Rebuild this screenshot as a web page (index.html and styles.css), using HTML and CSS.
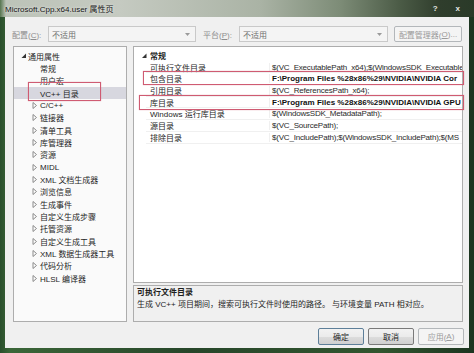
FILE: index.html
```html
<!DOCTYPE html>
<html lang="zh-CN">
<head>
<meta charset="utf-8">
<title>Microsoft.Cpp.x64.user 属性页</title>
<link rel="stylesheet" href="styles.css">
</head>
<body>
<div class="window">
  <div class="titlebar">
    <span class="title">Microsoft.Cpp.x64.user 属性页</span>
    <span class="caps"><span class="cap">?</span><span class="cap">x</span></span>
  </div>
  <div class="client">
    <div class="toolbar">
      <span class="lbl dim">配置(<u>C</u>):</span>
      <div class="combo c1"><span>不适用</span><svg class="arrow" width="5" height="3" viewBox="0 0 5 3"><polygon points="0,0 5,0 2.5,3" fill="#9a9a9a"/></svg></div>
      <span class="lbl dim l2">平台(<u>P</u>):</span>
      <div class="combo c2"><span>不适用</span><svg class="arrow" width="5" height="3" viewBox="0 0 5 3"><polygon points="0,0 5,0 2.5,3" fill="#9a9a9a"/></svg></div>
      <div class="btn disabled mgr">配置管理器(<u>O</u>)...</div>
    </div>
    <div class="main">
      <div class="tree">
        <div class="row root"><svg class="exp" width="7" height="6" viewBox="0 0 7 6"><polygon points="5,0.5 5,5 0.5,5" fill="#333"/></svg><span>通用属性</span></div>
        <div class="row leaf"><span>常规</span></div>
        <div class="row leaf"><span>用户宏</span></div>
        <div class="row leaf sel"><span>VC++ 目录</span></div>
        <div class="row sub"><svg class="exp" width="8" height="7" viewBox="0 0 8 7"><polygon points="1,0.5 4.5,3.5 1,6.5" fill="#fff" stroke="#8a8a8a" stroke-width="1"/></svg><span>C/C++</span></div>
        <div class="row sub"><svg class="exp" width="8" height="7" viewBox="0 0 8 7"><polygon points="1,0.5 4.5,3.5 1,6.5" fill="#fff" stroke="#8a8a8a" stroke-width="1"/></svg><span>链接器</span></div>
        <div class="row sub"><svg class="exp" width="8" height="7" viewBox="0 0 8 7"><polygon points="1,0.5 4.5,3.5 1,6.5" fill="#fff" stroke="#8a8a8a" stroke-width="1"/></svg><span>清单工具</span></div>
        <div class="row sub"><svg class="exp" width="8" height="7" viewBox="0 0 8 7"><polygon points="1,0.5 4.5,3.5 1,6.5" fill="#fff" stroke="#8a8a8a" stroke-width="1"/></svg><span>库管理器</span></div>
        <div class="row sub"><svg class="exp" width="8" height="7" viewBox="0 0 8 7"><polygon points="1,0.5 4.5,3.5 1,6.5" fill="#fff" stroke="#8a8a8a" stroke-width="1"/></svg><span>资源</span></div>
        <div class="row sub"><svg class="exp" width="8" height="7" viewBox="0 0 8 7"><polygon points="1,0.5 4.5,3.5 1,6.5" fill="#fff" stroke="#8a8a8a" stroke-width="1"/></svg><span>MIDL</span></div>
        <div class="row sub"><svg class="exp" width="8" height="7" viewBox="0 0 8 7"><polygon points="1,0.5 4.5,3.5 1,6.5" fill="#fff" stroke="#8a8a8a" stroke-width="1"/></svg><span>XML 文档生成器</span></div>
        <div class="row sub"><svg class="exp" width="8" height="7" viewBox="0 0 8 7"><polygon points="1,0.5 4.5,3.5 1,6.5" fill="#fff" stroke="#8a8a8a" stroke-width="1"/></svg><span>浏览信息</span></div>
        <div class="row sub"><svg class="exp" width="8" height="7" viewBox="0 0 8 7"><polygon points="1,0.5 4.5,3.5 1,6.5" fill="#fff" stroke="#8a8a8a" stroke-width="1"/></svg><span>生成事件</span></div>
        <div class="row sub"><svg class="exp" width="8" height="7" viewBox="0 0 8 7"><polygon points="1,0.5 4.5,3.5 1,6.5" fill="#fff" stroke="#8a8a8a" stroke-width="1"/></svg><span>自定义生成步骤</span></div>
        <div class="row sub"><svg class="exp" width="8" height="7" viewBox="0 0 8 7"><polygon points="1,0.5 4.5,3.5 1,6.5" fill="#fff" stroke="#8a8a8a" stroke-width="1"/></svg><span>托管资源</span></div>
        <div class="row sub"><svg class="exp" width="8" height="7" viewBox="0 0 8 7"><polygon points="1,0.5 4.5,3.5 1,6.5" fill="#fff" stroke="#8a8a8a" stroke-width="1"/></svg><span>自定义生成工具</span></div>
        <div class="row sub"><svg class="exp" width="8" height="7" viewBox="0 0 8 7"><polygon points="1,0.5 4.5,3.5 1,6.5" fill="#fff" stroke="#8a8a8a" stroke-width="1"/></svg><span>XML 数据生成器工具</span></div>
        <div class="row sub"><svg class="exp" width="8" height="7" viewBox="0 0 8 7"><polygon points="1,0.5 4.5,3.5 1,6.5" fill="#fff" stroke="#8a8a8a" stroke-width="1"/></svg><span>代码分析</span></div>
        <div class="row sub"><svg class="exp" width="8" height="7" viewBox="0 0 8 7"><polygon points="1,0.5 4.5,3.5 1,6.5" fill="#fff" stroke="#8a8a8a" stroke-width="1"/></svg><span>HLSL 编译器</span></div>
        <div class="mark tree-mark"></div>
      </div>
      <div class="right">
        <div class="grid">
          <div class="grow cat"><svg class="cexp" width="7" height="6" viewBox="0 0 7 6"><polygon points="5,0.5 5,5 0.5,5" fill="#333"/></svg><span class="name">常规</span></div>
          <div class="grow"><span class="name">可执行文件目录</span><span class="val">$(VC_ExecutablePath_x64);$(WindowsSDK_Executable</span></div>
          <div class="grow"><span class="name">包含目录</span><span class="val b">F:\Program Files %28x86%29\NVIDIA\NVIDIA Cor</span></div>
          <div class="grow"><span class="name">引用目录</span><span class="val">$(VC_ReferencesPath_x64);</span></div>
          <div class="grow"><span class="name">库目录</span><span class="val b">F:\Program Files %28x86%29\NVIDIA\NVIDIA GPU</span></div>
          <div class="grow"><span class="name">Windows 运行库目录</span><span class="val">$(WindowsSDK_MetadataPath);</span></div>
          <div class="grow"><span class="name">源目录</span><span class="val">$(VC_SourcePath);</span></div>
          <div class="grow"><span class="name">排除目录</span><span class="val">$(VC_IncludePath);$(WindowsSDK_IncludePath);$(MS</span></div>
          <div class="mark grid-mark1"></div>
          <div class="mark grid-mark2"></div>
        </div>
        <div class="desc">
          <div class="dtitle">可执行文件目录</div>
          <div class="dtext">生成 VC++ 项目期间，搜索可执行文件时使用的路径。 与环境变量 PATH 相对应。</div>
        </div>
      </div>
    </div>
    <div class="buttons">
      <div class="btn ok">确定</div>
      <div class="btn">取消</div>
      <div class="btn disabled">应用(<u>A</u>)</div>
    </div>
  </div>
</div>
</body>
</html>
```

FILE: styles.css
```css
* { box-sizing: border-box; }
html, body { margin: 0; padding: 0; }
body {
  width: 474px;
  height: 353px;
  overflow: hidden;
  font-family: "Liberation Sans", "Noto Sans CJK SC", sans-serif;
  font-size: 8px;
  color: #1e1e1e;
}
u { text-decoration: underline; }

.window {
  width: 474px;
  height: 353px;
  display: flex;
  flex-direction: column;
  background: linear-gradient(to right, #2a4f2c 0%, #3b6638 2%, #27462a 40%, #32562f 80%, #1c3520 100%);
}

.titlebar {
  height: 17px;
  flex: none;
  display: flex;
  align-items: center;
  background: linear-gradient(to right, #56754f 0px, #bcc3b8 6px, #c5cac1 120px, #aab3a5 260px, #7d8c77 340px, #4b5b46 400px, #2f3d2c 440px, #2a3a28 474px);
}
.title {
  padding-left: 5px;
  font-size: 8px;
  color: #161616;
  text-shadow: 0 0 3px rgba(255,255,255,0.9);
}
.caps {
  margin-left: auto;
  display: flex;
  gap: 18px;
  padding-right: 14px;
}
.cap {
  color: #e4e8e4;
  font-weight: bold;
  font-family: "Liberation Sans", sans-serif;
  font-size: 8px;
}

.client {
  margin: 0 5px;
  height: 331px;
  background: #f0f0f0;
  display: flex;
  flex-direction: column;
}

.toolbar {
  margin-top: 9px;
  height: 16px;
  display: flex;
  align-items: center;
  padding-left: 7px;
}
.lbl { width: 36px; flex: none; }
.l2 { margin-left: 7px; }
.dim { color: #8d8d8d; }
.combo {
  height: 16px;
  flex: none;
  border: 1px solid #c9c9c9;
  background: #f4f4f4;
  display: flex;
  align-items: center;
  padding: 0 5px 0 3px;
  color: #6f6f6f;
}
.combo .arrow { margin-left: auto; }
.c1 { width: 148px; }
.c2 { width: 149px; }

.btn {
  height: 17px;
  width: 46px;
  flex: none;
  display: flex;
  align-items: center;
  justify-content: center;
  border: 1px solid #7a7a7a;
  border-radius: 2px;
  background: linear-gradient(#f2f2f2 0%, #ebebeb 50%, #dddddd 51%, #d0d0d0 100%);
  color: #1e1e1e;
}
.btn.ok { border-color: #5d7f99; }
.btn.disabled {
  border-color: #b3b7ba;
  background: #f4f4f4;
  color: #9a9a9a;
}
.mgr { width: 68px; height: 16px; margin-left: 6px; }

.main {
  margin-top: 4px;
  height: 276px;
  display: flex;
  padding-left: 8px;
}

.tree {
  position: relative;
  width: 114px;
  height: 276px;
  flex: none;
  border: 1px solid #adadad;
  background: #fafafa;
  padding-top: 3px;
}
.row {
  height: 12.33px;
  display: flex;
  align-items: center;
  white-space: nowrap;
}
.row.root { padding-left: 7px; }
.row.root .exp { width: 7px; flex: none; }
.row.sub { padding-left: 18px; }
.row.sub .exp { width: 8px; flex: none; }
.row.leaf { padding-left: 26px; }
.row.sel { background: #d7d7df; }

.mark {
  position: absolute;
  border: 1px solid #cf5b72;
  box-shadow: 0 0 1px rgba(207,91,114,0.6);
  pointer-events: none;
}
.tree-mark { left: 14px; top: 35px; width: 73px; height: 19px; }

.right {
  margin-left: 6px;
  width: 330px;
  flex: none;
  display: flex;
  flex-direction: column;
}
.grid {
  position: relative;
  height: 237px;
  border: 1px solid #adadad;
  background: #ffffff;
  padding-top: 3px;
}
.grow {
  height: 11.7px;
  display: flex;
  align-items: center;
  white-space: nowrap;
  border-bottom: 1px solid #f0f0f0;
  margin-left: 12px;
}
.grow.cat { border-bottom: none; margin-left: 0; padding-left: 6px; }
.grow .cexp { width: 10px; flex: none; }
.grow .name { width: 123px; flex: none; padding-left: 4px; overflow: hidden; }
.grow.cat .name { font-weight: bold; padding-left: 0; }
.grow .val {
  flex: 1;
  min-width: 0;
  overflow: hidden;
  padding-left: 2px;
  border-left: 1px solid #f0f0f0;
  color: #2a2a2a;
  letter-spacing: -0.2px;
}
.grow .val.b { font-weight: bold; color: #111; letter-spacing: 0; }
.grid-mark1 { left: 9px; top: 24px; right: -2px; height: 14px; }
.grid-mark2 { left: 5px; top: 48px; right: -2px; height: 15px; }

.desc {
  margin-top: 2px;
  height: 37px;
  border: 1px solid #adadad;
  background: #f0f0f0;
  padding: 1px 0 0 3px;
  line-height: 12px;
}
.dtitle { font-weight: bold; }

.buttons {
  margin-top: 6px;
  display: flex;
  justify-content: flex-end;
  gap: 4px;
  padding-right: 5px;
}
```
